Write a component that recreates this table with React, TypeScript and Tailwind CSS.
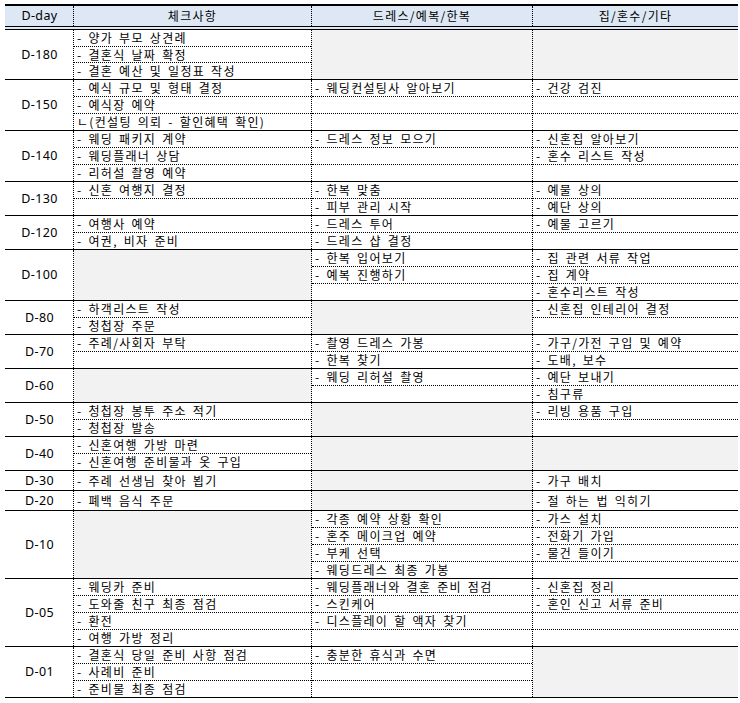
type Cell = string[] | null

type Group = { d: string; h: string; cols: [Cell, Cell, Cell] }

const groups: Group[] = [
  { d: 'D-180', h: 'h-[50px]', cols: [['- 양가 부모 상견례', '- 결혼식 날짜 확정', '- 결혼 예산 및 일정표 작성'], null, null] },
  { d: 'D-150', h: 'h-[51px]', cols: [['- 예식 규모 및 형태 결정', '- 예식장 예약', 'ㄴ(컨설팅 의뢰 - 할인혜택 확인)'], ['- 웨딩컨설팅사 알아보기', '', ''], ['- 건강 검진', '', '']] },
  { d: 'D-140', h: 'h-[51px]', cols: [['- 웨딩 패키지 계약', '- 웨딩플래너 상담', '- 리허설 촬영 예약'], ['- 드레스 정보 모으기', '', ''], ['- 신혼집 알아보기', '- 혼수 리스트 작성', '']] },
  { d: 'D-130', h: 'h-[34px]', cols: [['- 신혼 여행지 결정', ''], ['- 한복 맞춤', '- 피부 관리 시작'], ['- 예물 상의', '- 예단 상의']] },
  { d: 'D-120', h: 'h-[34px]', cols: [['- 여행사 예약', '- 여권, 비자 준비'], ['- 드레스 투어', '- 드레스 샵 결정'], ['- 예물 고르기', '']] },
  { d: 'D-100', h: 'h-[51px]', cols: [null, ['- 한복 입어보기', '- 예복 진행하기', ''], ['- 집 관련 서류 작업', '- 집 계약', '- 혼수리스트 작성']] },
  { d: 'D-80', h: 'h-[34px]', cols: [['- 하객리스트 작성', '- 청첩장 주문'], null, ['- 신혼집 인테리어 결정', '']] },
  { d: 'D-70', h: 'h-[34px]', cols: [['- 주례/사회자 부탁', ''], ['- 촬영 드레스 가봉', '- 한복 찾기'], ['- 가구/가전 구입 및 예약', '- 도배, 보수']] },
  { d: 'D-60', h: 'h-[34px]', cols: [null, ['- 웨딩 리허설 촬영', ''], ['- 예단 보내기', '- 침구류']] },
  { d: 'D-50', h: 'h-[34px]', cols: [['- 청첩장 봉투 주소 적기', '- 청첩장 발송'], null, ['- 리빙 용품 구입', '']] },
  { d: 'D-40', h: 'h-[34px]', cols: [['- 신혼여행 가방 마련', '- 신혼여행 준비물과 옷 구입'], null, null] },
  { d: 'D-30', h: 'h-[20px]', cols: [['- 주례 선생님 찾아 뵙기'], null, ['- 가구 배치']] },
  { d: 'D-20', h: 'h-[20px]', cols: [['- 폐백 음식 주문'], null, ['- 절 하는 법 익히기']] },
  { d: 'D-10', h: 'h-[68px]', cols: [null, ['- 각종 예약 상황 확인', '- 혼주 메이크업 예약', '- 부케 선택', '- 웨딩드레스 최종 가봉'], ['- 가스 설치', '- 전화기 가입', '- 물건 들이기', '']] },
  { d: 'D-05', h: 'h-[68px]', cols: [['- 웨딩카 준비', '- 도와줄 친구 최종 점검', '- 환전', '- 여행 가방 정리'], ['- 웨딩플래너와 결혼 준비 점검', '- 스킨케어', '- 디스플레이 할 액자 찾기', ''], ['- 신혼집 정리', '- 혼인 신고 서류 준비', '', '']] },
  { d: 'D-01', h: 'h-[51px]', cols: [['- 결혼식 당일 준비 사항 점검', '- 사례비 준비', '- 준비물 최종 점검'], ['- 충분한 휴식과 수면', '', ''], null] },
]

const widths = ['w-[238px] border-r', 'w-[221px] border-r', 'w-[205px]']

function Column({ cell, w }: { cell: Cell; w: string }) {
  if (!cell) return <div className={`${w} border-dotted border-black bg-[#f2f2f2]`} />
  return (
    <div className={`${w} border-dotted border-black flex flex-col`}>
      {cell.map((t, i) => (
        <div key={i}
          className={`flex-1 flex items-center pl-[3px] whitespace-nowrap overflow-hidden ${i < cell.length - 1 ? 'border-b border-dotted border-black' : ''}`}>
          {t}
        </div>
      ))}
    </div>
  )
}

// D-day labels use a Latin face, tighter than the Korean text
const dayCls = "w-[69px] pl-px border-r border-dotted border-black flex items-center justify-center font-['Noto_Sans',sans-serif] text-[12.5px] tracking-[0.4px]"

export default function App() {
  return (
    <div className="bg-white w-[740px] h-[703px] pt-1 pl-[5px] text-black text-[12px] leading-[16px] tracking-[1.3px] [word-spacing:2px] font-['Noto_Sans_CJK_KR',sans-serif]">
      <div className="w-[733px]">
        <div className="flex h-[26px] border-t-2 border-b-4 border-double border-black bg-[#dde8f4]">
          <div className={dayCls}>D-day</div>
          <div className="w-[238px] border-r border-dotted border-black flex items-center justify-center">체크사항</div>
          <div className="w-[221px] border-r border-dotted border-black flex items-center justify-center">드레스/예복/한복</div>
          <div className="w-[205px] flex items-center justify-center">집/혼수/기타</div>
        </div>
        {groups.map(g => (
          <div key={g.d} className={`flex ${g.h} border-b border-black`}>
            <div className={dayCls}>{g.d}</div>
            {g.cols.map((c, i) => <Column key={i} cell={c} w={widths[i]} />)}
          </div>
        ))}
      </div>
    </div>
  )
}
